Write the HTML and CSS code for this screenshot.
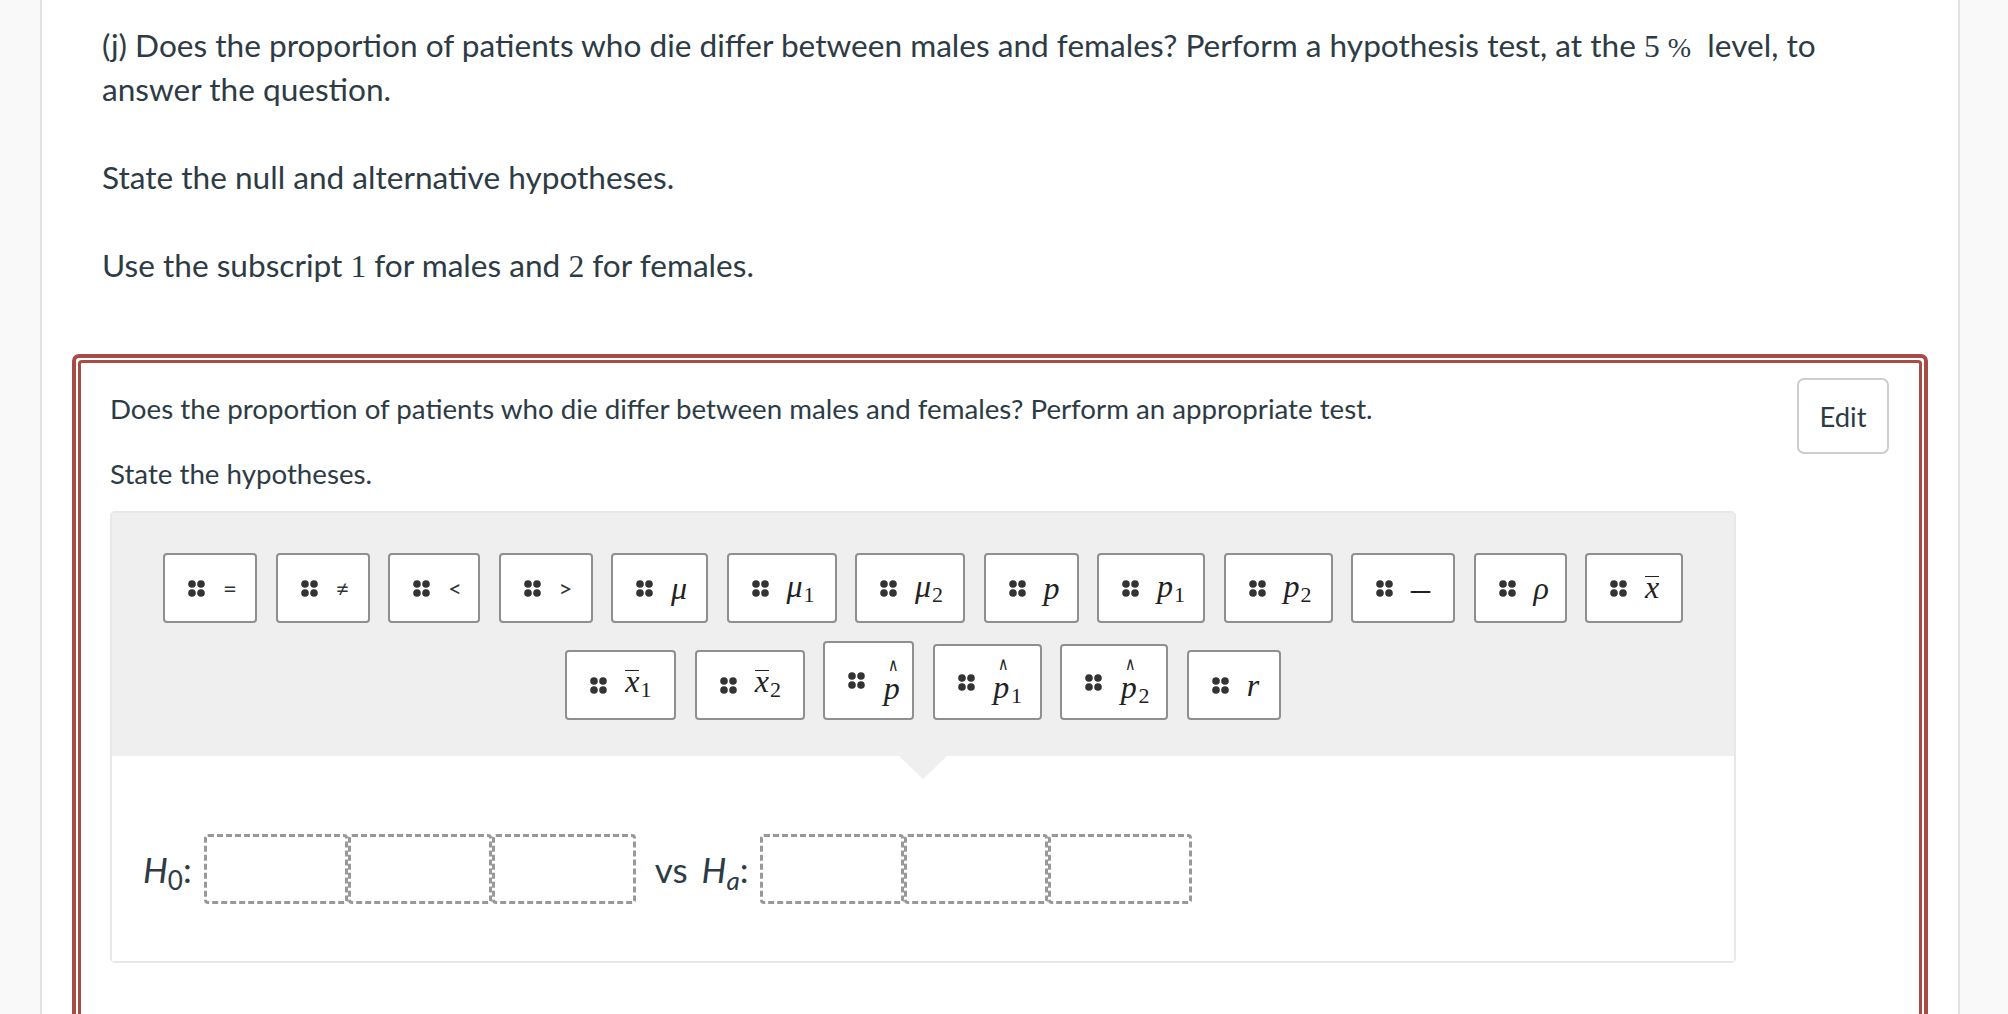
FILE: index.html
```html
<!DOCTYPE html>
<html lang="en">
<head>
<meta charset="utf-8">
<title>Hypothesis test</title>
<link rel="stylesheet" href="styles.css">
</head>
<body>
<div class="page">
  <div class="intro">
    <p>(j) Does the proportion of patients who die differ between males and females? Perform a hypothesis test, at the <span class="m">5</span> <span class="m pct">%</span>&nbsp; level, to answer the question.</p>
    <p>State the null and alternative hypotheses.</p>
    <p class="last">Use the subscript <span class="m">1</span> for males and <span class="m">2</span> for females.</p>
  </div>

  <div class="qbox">
    <div class="qinner">
      <div class="qmain">
        <p class="qtext first">Does the proportion of patients who die differ between males and females? Perform an appropriate test.</p>
        <p class="qtext second">State the hypotheses.</p>

        <div class="dnd">
          <div class="bank">
            <div class="tile w94"><svg class="grip" viewBox="0 0 17 17"><circle cx="4" cy="4" r="3.8"/><circle cx="13" cy="4" r="3.8"/><circle cx="4" cy="13" r="3.8"/><circle cx="13" cy="13" r="3.8"/></svg><span class="op">=</span></div>
            <div class="tile w94"><svg class="grip" viewBox="0 0 17 17"><circle cx="4" cy="4" r="3.8"/><circle cx="13" cy="4" r="3.8"/><circle cx="4" cy="13" r="3.8"/><circle cx="13" cy="13" r="3.8"/></svg><span class="op">≠</span></div>
            <div class="tile w92"><svg class="grip" viewBox="0 0 17 17"><circle cx="4" cy="4" r="3.8"/><circle cx="13" cy="4" r="3.8"/><circle cx="4" cy="13" r="3.8"/><circle cx="13" cy="13" r="3.8"/></svg><span class="op">&lt;</span></div>
            <div class="tile w94"><svg class="grip" viewBox="0 0 17 17"><circle cx="4" cy="4" r="3.8"/><circle cx="13" cy="4" r="3.8"/><circle cx="4" cy="13" r="3.8"/><circle cx="13" cy="13" r="3.8"/></svg><span class="op">&gt;</span></div>
            <div class="tile w97"><svg class="grip" viewBox="0 0 17 17"><circle cx="4" cy="4" r="3.8"/><circle cx="13" cy="4" r="3.8"/><circle cx="4" cy="13" r="3.8"/><circle cx="13" cy="13" r="3.8"/></svg><span class="sym"><span class="mi">μ</span></span></div>
            <div class="tile w110"><svg class="grip" viewBox="0 0 17 17"><circle cx="4" cy="4" r="3.8"/><circle cx="13" cy="4" r="3.8"/><circle cx="4" cy="13" r="3.8"/><circle cx="13" cy="13" r="3.8"/></svg><span class="sym"><span class="mi">μ</span><span class="sb">1</span></span></div>
            <div class="tile w110"><svg class="grip" viewBox="0 0 17 17"><circle cx="4" cy="4" r="3.8"/><circle cx="13" cy="4" r="3.8"/><circle cx="4" cy="13" r="3.8"/><circle cx="13" cy="13" r="3.8"/></svg><span class="sym"><span class="mi">μ</span><span class="sb">2</span></span></div>
            <div class="tile w95"><svg class="grip" viewBox="0 0 17 17"><circle cx="4" cy="4" r="3.8"/><circle cx="13" cy="4" r="3.8"/><circle cx="4" cy="13" r="3.8"/><circle cx="13" cy="13" r="3.8"/></svg><span class="sym"><span class="mi">p</span></span></div>
            <div class="tile w108"><svg class="grip" viewBox="0 0 17 17"><circle cx="4" cy="4" r="3.8"/><circle cx="13" cy="4" r="3.8"/><circle cx="4" cy="13" r="3.8"/><circle cx="13" cy="13" r="3.8"/></svg><span class="sym"><span class="mi">p</span><span class="sb">1</span></span></div>
            <div class="tile w109"><svg class="grip" viewBox="0 0 17 17"><circle cx="4" cy="4" r="3.8"/><circle cx="13" cy="4" r="3.8"/><circle cx="4" cy="13" r="3.8"/><circle cx="13" cy="13" r="3.8"/></svg><span class="sym"><span class="mi">p</span><span class="sb">2</span></span></div>
            <div class="tile w104"><svg class="grip" viewBox="0 0 17 17"><circle cx="4" cy="4" r="3.8"/><circle cx="13" cy="4" r="3.8"/><circle cx="4" cy="13" r="3.8"/><circle cx="13" cy="13" r="3.8"/></svg><span class="sym"><span class="mo">–</span></span></div>
            <div class="tile w93"><svg class="grip" viewBox="0 0 17 17"><circle cx="4" cy="4" r="3.8"/><circle cx="13" cy="4" r="3.8"/><circle cx="4" cy="13" r="3.8"/><circle cx="13" cy="13" r="3.8"/></svg><span class="sym"><span class="mi">ρ</span></span></div>
            <div class="tile w98"><svg class="grip" viewBox="0 0 17 17"><circle cx="4" cy="4" r="3.8"/><circle cx="13" cy="4" r="3.8"/><circle cx="4" cy="13" r="3.8"/><circle cx="13" cy="13" r="3.8"/></svg><span class="sym"><span class="mi bar">x</span></span></div>

            <div class="tile w111"><svg class="grip" viewBox="0 0 17 17"><circle cx="4" cy="4" r="3.8"/><circle cx="13" cy="4" r="3.8"/><circle cx="4" cy="13" r="3.8"/><circle cx="13" cy="13" r="3.8"/></svg><span class="sym"><span class="mi bar">x</span><span class="sb">1</span></span></div>
            <div class="tile w110"><svg class="grip" viewBox="0 0 17 17"><circle cx="4" cy="4" r="3.8"/><circle cx="13" cy="4" r="3.8"/><circle cx="4" cy="13" r="3.8"/><circle cx="13" cy="13" r="3.8"/></svg><span class="sym"><span class="mi bar">x</span><span class="sb">2</span></span></div>
            <div class="tile w91 tall"><svg class="grip" viewBox="0 0 17 17"><circle cx="4" cy="4" r="3.8"/><circle cx="13" cy="4" r="3.8"/><circle cx="4" cy="13" r="3.8"/><circle cx="13" cy="13" r="3.8"/></svg><span class="sym"><span class="hatted"><span class="hat">∧</span><span class="mi">p</span></span></span></div>
            <div class="tile w109 tall2"><svg class="grip" viewBox="0 0 17 17"><circle cx="4" cy="4" r="3.8"/><circle cx="13" cy="4" r="3.8"/><circle cx="4" cy="13" r="3.8"/><circle cx="13" cy="13" r="3.8"/></svg><span class="sym"><span class="hatted"><span class="hat">∧</span><span class="mi">p</span></span><span class="sb">1</span></span></div>
            <div class="tile w108 tall2"><svg class="grip" viewBox="0 0 17 17"><circle cx="4" cy="4" r="3.8"/><circle cx="13" cy="4" r="3.8"/><circle cx="4" cy="13" r="3.8"/><circle cx="13" cy="13" r="3.8"/></svg><span class="sym"><span class="hatted"><span class="hat">∧</span><span class="mi">p</span></span><span class="sb">2</span></span></div>
            <div class="tile w94"><svg class="grip" viewBox="0 0 17 17"><circle cx="4" cy="4" r="3.8"/><circle cx="13" cy="4" r="3.8"/><circle cx="4" cy="13" r="3.8"/><circle cx="13" cy="13" r="3.8"/></svg><span class="sym"><span class="mi">r</span></span></div>
          </div>

          <div class="answer">
            <span class="hlabel"><i>H</i><span class="hsub">0</span>:</span>
            <div class="slots"><div class="slot"></div><div class="slot"></div><div class="slot"></div></div>
            <span class="vs">vs</span>
            <span class="hlabel"><i>H</i><span class="hsub"><i>a</i></span>:</span>
            <div class="slots"><div class="slot"></div><div class="slot"></div><div class="slot"></div></div>
          </div>
        </div>
      </div>
      <button class="edit" type="button">Edit</button>
    </div>
  </div>
</div>
</body>
</html>
```

FILE: styles.css
```css
* { box-sizing: border-box; }
html, body { margin: 0; height: 100%; }
body {
  background: #f9f9f9;
  font-family: Lato, "Noto Sans", sans-serif;
  color: #2d3b45;
  overflow: hidden;
}
.page {
  margin: 0 48px 0 40px;
  min-height: 100vh;
  background: #fff;
  border-left: 2px solid #e2e2e2;
  border-right: 2px solid #e2e2e2;
  padding: 23px 30px 60px;
}
.intro {
  padding: 0 90px 0 30px;
  font-size: 31.6px;
  line-height: 44px;
}
.intro p { margin: 0 0 44px; }
.intro p.last { margin-bottom: 67px; }
.m { font-family: "Liberation Serif", serif; line-height: 1; }
.m.pct { font-size: 28px; }

.qbox {
  border: 4px solid #a64b45;
  border-radius: 7px;
  padding: 2px;
}
.qinner {
  border: 3px solid #a64b45;
  border-radius: 4px;
  display: flex;
  align-items: flex-start;
  padding-bottom: 80px;
}
.qmain { flex: 1; padding: 27px 0 0 29px; }
.qtext { margin: 0; font-size: 27.7px; line-height: 38px; }
.qtext.first { margin-bottom: 27px; }
.qtext.second { margin-bottom: 18px; }

.edit {
  flex: none;
  margin: 15px 30px 0 61px;
  width: 92px;
  height: 76px;
  padding: 0;
  border: 2px solid #c9ced2;
  border-radius: 7px;
  background: #fff;
  font-family: Lato, sans-serif;
  font-size: 27.4px;
  color: #2d3b45;
}

.dnd {
  border: 2px solid #e8e8e8;
  border-radius: 5px;
}
.bank {
  position: relative;
  background: #efefef;
  padding: 40px 40px 36px;
  display: flex;
  flex-wrap: wrap;
  justify-content: center;
  align-items: flex-end;
  row-gap: 18px;
  column-gap: 18.5px;
}
.bank::after {
  content: "";
  position: absolute;
  left: 50%;
  top: 100%;
  margin-left: -24px;
  border-left: 24px solid transparent;
  border-right: 24px solid transparent;
  border-top: 23px solid #efefef;
}

.tile {
  display: flex;
  align-items: center;
  gap: 18px;
  height: 70px;
  padding: 0 8px 0 23px;
  background: #fff;
  border: 2px solid #8f8f8f;
  border-radius: 4px;
  flex: none;
}
.tile.tall { height: 79px; }
.tile.tall2 { height: 76px; }
.w91 { width: 91px; } .w92 { width: 92px; } .w93 { width: 93px; }
.w94 { width: 94px; } .w95 { width: 95px; } .w97 { width: 97px; }
.w98 { width: 98px; } .w104 { width: 104px; } .w108 { width: 108px; }
.w109 { width: 109px; } .w110 { width: 110px; } .w111 { width: 111px; }

.grip { width: 17px; height: 17px; flex: none; fill: #333; }
.op { font-family: Lato, sans-serif; font-size: 24px; color: #333; line-height: 1; }
.sym {
  display: block;
  color: #222;
  font-family: "Liberation Serif", serif;
  font-size: 16px;
  line-height: 1;
  white-space: nowrap;
}
.mi { font-style: italic; font-size: 32px; }
.mo { font-size: 38px; font-weight: 300; }
.sb { font-size: 22px; vertical-align: -5px; margin-left: 1px; }
.bar {
  display: inline-block;
  line-height: 21px;
  border-top: 1.5px solid #222;
}
.hatted { display: inline-block; text-align: center; }
.hat {
  display: block;
  font-family: "DejaVu Sans", sans-serif;
  font-size: 18px;
  line-height: 14px;
  padding-left: 4px;
  transform: scaleX(0.8);
}

.answer {
  display: flex;
  align-items: center;
  padding: 78px 32px 57px 31px;
  background: #fff;
}
.hlabel { font-size: 35px; line-height: 1; margin-right: 12px; white-space: nowrap; }
.hlabel i { font-style: italic; }
.hsub { font-size: 26px; position: relative; top: 7px; }
.slots { display: flex; }
.slot {
  width: 144px;
  height: 70px;
  border: 3px dashed #999;
  border-radius: 4px;
}
.vs { font-size: 35px; line-height: 1; margin: 0 14px 0 19px; }
```
